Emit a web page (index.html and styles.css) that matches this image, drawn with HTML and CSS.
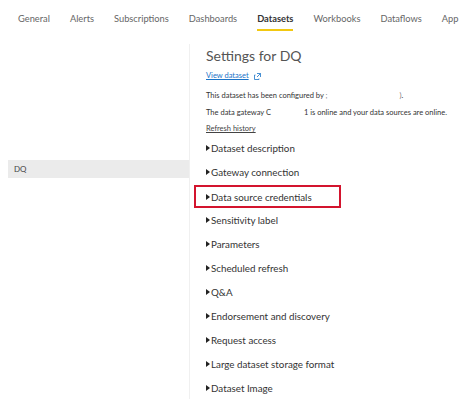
FILE: index.html
```html
<!DOCTYPE html>
<html>
<head>
<meta charset="utf-8">
<link rel="stylesheet" href="styles.css">
</head>
<body>
<nav class="tabs">
  <span class="tab">General</span>
  <span class="tab">Alerts</span>
  <span class="tab">Subscriptions</span>
  <span class="tab">Dashboards</span>
  <span class="tab active">Datasets</span>
  <span class="tab">Workbooks</span>
  <span class="tab">Dataflows</span>
  <span class="tab">App</span>
</nav>
<div class="main">
  <aside class="side">
    <div class="side-item">DQ</div>
  </aside>
  <section class="content">
    <h1 class="title">Settings for DQ</h1>
    <div class="link-row"><span class="link">View dataset</span>
      <svg class="ext" width="7" height="7" viewBox="0 0 7 7"><path d="M3 0.5H6.5V4M6.5 0.5L3 4M5 5.5V6.5H0.5V2H1.5" fill="none" stroke="#1a73c8" stroke-width="0.8"/></svg>
    </div>
    <p class="info first">This dataset has been configured by <span class="gap1">;</span> <span class="tail">)</span>.</p>
    <p class="info">The data gateway C<span class="gap2"></span>1 is online and your data sources are online.</p>
    <p class="info"><span class="plain-link">Refresh history</span></p>
    <ul class="sections">
      <li class="sec"><span class="tri"></span>Dataset description</li>
      <li class="sec"><span class="tri"></span>Gateway connection</li>
      <li class="sec boxed"><span class="tri"></span>Data source credentials</li>
      <li class="sec"><span class="tri"></span>Sensitivity label</li>
      <li class="sec"><span class="tri"></span>Parameters</li>
      <li class="sec"><span class="tri"></span>Scheduled refresh</li>
      <li class="sec"><span class="tri"></span>Q&amp;A</li>
      <li class="sec"><span class="tri"></span>Endorsement and discovery</li>
      <li class="sec"><span class="tri"></span>Request access</li>
      <li class="sec"><span class="tri"></span>Large dataset storage format</li>
      <li class="sec"><span class="tri"></span>Dataset Image</li>
    </ul>
  </section>
</div>
</body>
</html>
```
FILE: styles.css
```css
html, body {
  margin: 0;
  padding: 0;
  background: #fff;
  font-family: "Lato", "Noto Sans", sans-serif;
  color: #333;
}
.tabs {
  display: flex;
  gap: 20px;
  padding: 11px 0 0 18px;
  height: 34px;
  box-sizing: border-box;
  font-size: 9.3px;
  color: #666;
  white-space: nowrap;
  overflow: hidden;
}
.tab {
  position: relative;
  line-height: 16px;
}
.tab.active {
  font-weight: bold;
  color: #333;
}
.tab.active::after {
  content: "";
  position: absolute;
  left: 0;
  right: 0;
  top: 18px;
  height: 2px;
  background: #f2c811;
}
.main {
  display: flex;
  margin-top: 10px;
}
.side {
  width: 190px;
  box-sizing: border-box;
  padding: 116px 0 0 8px;
  border-right: 1px solid #f0f0f0;
  height: 355px;
}
.side-item {
  background: #ebebeb;
  height: 18px;
  line-height: 18px;
  padding-left: 6px;
  font-size: 8px;
  color: #444;
}
.content {
  padding-left: 16px;
}
.title {
  margin: 2px 0 0;
  font-size: 14px;
  font-weight: normal;
  color: #555;
  line-height: 20px;
}
.link-row {
  margin-top: 4px;
  font-size: 7.5px;
  line-height: 12px;
  display: flex;
  align-items: center;
  gap: 5px;
  white-space: nowrap;
}
.link {
  color: #1a73c8;
  text-decoration: underline;
}
.info {
  margin: 4.5px 0 0;
  font-size: 7.5px;
  line-height: 12px;
  color: #333;
  white-space: nowrap;
}
.info.first { margin-top: 8px; }
.gap1 { margin-right: 70px; color: #888; }
.tail { color: #777; }
.gap2 { display: inline-block; width: 33px; }
.plain-link { text-decoration: underline; color: #444; }
.sections {
  list-style: none;
  margin: 1px 0 0 -12px;
  padding: 0;
}
.sec {
  height: 24px;
  line-height: 24px;
  font-size: 9.8px;
  color: #333;
  padding-left: 12px;
  box-sizing: border-box;
  display: flex;
  align-items: center;
  white-space: nowrap;
}
.tri {
  display: inline-block;
  width: 0;
  height: 0;
  border-top: 3px solid transparent;
  border-bottom: 3px solid transparent;
  border-left: 4px solid #222;
  margin-right: 1px;
}
.boxed {
  width: 147px;
  border: 2px solid #d3142e;
  padding-left: 10px;
  height: 23px;
  margin: 1px 0 0;
}
```
